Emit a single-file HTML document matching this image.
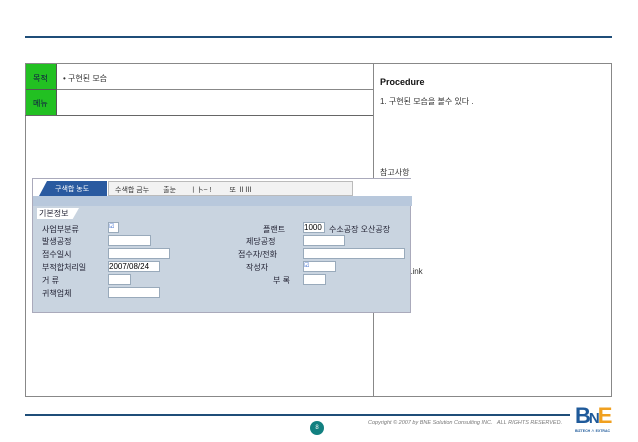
<!DOCTYPE html><html><head><meta charset="utf-8"><style>
*{margin:0;padding:0;box-sizing:border-box}
body{width:638px;height:442px;background:#fff;position:relative;font-family:"Liberation Sans","Noto Sans CJK KR",sans-serif;overflow:hidden}
.a{position:absolute}
.t{font-size:8px;color:#333}
.in{position:absolute;background:#fff;border:1px solid #9ab;height:11px}
.l{position:absolute;font-size:8px;color:#223}
</style></head><body>
<div class="a" style="left:25px;top:36px;width:587px;height:2px;background:#1f4e79"></div>
<div class="a" style="left:25px;top:63px;width:587px;height:334px;border:1px solid #888"></div>
<div class="a" style="left:373px;top:63px;width:1px;height:334px;background:#888"></div>
<div class="a" style="left:25px;top:89px;width:348px;height:1px;background:#888"></div>
<div class="a" style="left:25px;top:115px;width:348px;height:1px;background:#666"></div>
<div class="a" style="left:26px;top:64px;width:31px;height:51px;background:#22c022;border-right:1px solid #555"></div>
<div class="a" style="left:26px;top:89px;width:31px;height:1px;background:#555"></div>
<div class="a t" style="left:33px;top:73px;color:#114">목적</div>
<div class="a t" style="left:33px;top:98px;color:#114">메뉴</div>
<div class="a t" style="left:63px;top:73px">• 구현된 모습</div>
<div class="a" style="left:380px;top:77px;font-size:9px;font-weight:bold;color:#111">Procedure</div>
<div class="a t" style="left:380px;top:96px">1. 구현된 모습을 볼수 있다 .</div>
<div class="a t" style="left:380px;top:167px">참고사항</div>
<div class="a t" style="left:408px;top:267px">Link</div>
<div class="a" style="left:32px;top:178px;width:379px;height:135px;background:#c9d4e0;border:1px solid #aab">
<div class="a" style="left:0;top:0;width:379px;height:17px;background:#fff"></div>
<div class="a" style="left:6px;top:2px;width:68px;height:15px;background:#2a5aa0;color:#fff;font-size:7px;padding:3px 0 0 16px;clip-path:polygon(8px 0,100% 0,100% 100%,0 100%)">구색합 농도</div>
<div class="a" style="left:75px;top:2px;width:245px;height:15px;background:#f2f2f2;border:1px solid #bbb;font-size:7px;color:#333;padding-top:3px"><span style="margin-left:6px">수색합 금누</span><span style="margin-left:14px">출눈</span><span style="margin-left:14px">ㅣ卜~ !</span><span style="margin-left:18px">또 ⅡⅢ</span></div>
<div class="a" style="left:0;top:17px;width:379px;height:10px;background:#b8c8dc"></div>
<div class="a" style="left:4px;top:29px;width:42px;height:11px;background:#fff;font-size:8px;color:#223;padding-left:2px;clip-path:polygon(0 0,100% 0,85% 100%,0 100%)">기본정보</div>
<div class="l" style="left:9px;top:45px">사업부분류</div><div class="in" style="left:75px;top:43px;width:11px;font-size:6px;color:#36c">☑</div>
<div class="l" style="left:9px;top:57px">발생공정</div><div class="in" style="left:75px;top:56px;width:43px"></div>
<div class="l" style="left:9px;top:70px">접수일시</div><div class="in" style="left:75px;top:69px;width:62px"></div>
<div class="l" style="left:9px;top:83px">부적합처리일</div><div class="in" style="left:75px;top:82px;width:52px;font-size:8px;color:#000;line-height:9px">2007/08/24</div>
<div class="l" style="left:9px;top:96px">거 류</div><div class="in" style="left:75px;top:95px;width:23px"></div>
<div class="l" style="left:9px;top:109px">귀책업체</div><div class="in" style="left:75px;top:108px;width:52px"></div>
<div class="l" style="left:230px;top:45px">플랜트</div><div class="in" style="left:270px;top:43px;width:22px;font-size:8px;line-height:9px">1000</div><div class="l" style="left:296px;top:45px">수소공장 오산공장</div>
<div class="l" style="left:213px;top:57px">제당공정</div><div class="in" style="left:270px;top:56px;width:42px"></div>
<div class="l" style="left:205px;top:70px">접수자/전화</div><div class="in" style="left:270px;top:69px;width:102px"></div>
<div class="l" style="left:213px;top:83px">작성자</div><div class="in" style="left:270px;top:82px;width:33px;font-size:6px;color:#36c">☑</div>
<div class="l" style="left:240px;top:96px">부 록</div><div class="in" style="left:270px;top:95px;width:23px"></div>
</div>
<div class="a" style="left:25px;top:414px;width:545px;height:2px;background:#1f4e79"></div>
<div class="a" style="left:310px;top:421px;width:14px;height:14px;border-radius:50%;background:#128080;color:#fff;font-size:6px;text-align:center;line-height:14px">8</div>
<div class="a" style="left:368px;top:420px;font-size:5.5px;font-style:italic;color:#777">Copyright © 2007 by BNE Solution Consulting INC.&nbsp;&nbsp; ALL RIGHTS RESERVED.</div>
<div class="a" style="left:575px;top:405px;font-size:22px;font-weight:bold;letter-spacing:-2px;line-height:22px"><span style="color:#1f5a9a">B</span><span style="color:#1f5a9a;font-size:15px">N</span><span style="color:#f0a020">E</span></div>
<div class="a" style="left:575px;top:429px;font-size:3.5px;color:#1f5a9a;font-weight:bold">BIZTECH ∧ EXTRAC</div>
</body></html>
